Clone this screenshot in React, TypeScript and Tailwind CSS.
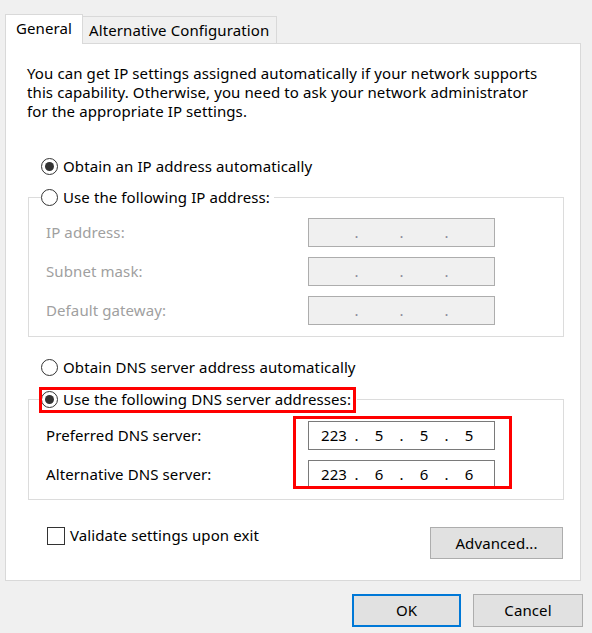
import React from 'react';

// Windows "Internet Protocol Version 4 (TCP/IPv4) Properties" dialog, General tab

const Radio: React.FC<{ checked?: boolean }> = ({ checked }) => (
    <span className="w-[17px] h-[17px] rounded-full border border-[#333333] bg-white flex items-center justify-center shrink-0">
        {checked && <span className="w-[9px] h-[9px] rounded-full bg-[#333333]" />}
    </span>
);

const IpBox: React.FC<{ octets?: string[]; disabled?: boolean }> = ({ octets, disabled }) => {
    const parts = octets ?? ['', '', '', ''];
    return (
        <div
            className={
                disabled
                    ? 'w-[187px] h-[29px] border border-[#adadad] bg-[#f0f0f0] flex items-center pl-[7px] text-[#8a8a9a]'
                    : 'w-[187px] h-[29px] border border-[#7a7a7a] bg-white flex items-center pl-[7px] text-black'
            }
        >
            {parts.map((p, i) => (
                <React.Fragment key={i}>
                    <span className="w-[36px] text-center">{p}</span>
                    {i < 3 && <span className="w-[9px] text-center">.</span>}
                </React.Fragment>
            ))}
        </div>
    );
};

const Row: React.FC<{ label: string; disabled?: boolean; children: React.ReactNode }> = ({ label, disabled, children }) => (
    <div className="flex items-center h-[29px]">
        <span className={disabled ? 'w-[262px] text-[#a0a0a0]' : 'w-[262px]'}>{label}</span>
        {children}
    </div>
);

const App: React.FC = () => {
    return (
        <div className="w-[592px] h-[633px] bg-[#f0f0f0] pt-[14px] pl-[5px] text-[15px] tracking-[0.1px] leading-[19px] text-black font-['Noto_Sans',_sans-serif]">
            {/* tabs */}
            <div className="flex items-end h-[29px]">
                <div className="relative z-10 h-[30px] -mb-px w-[78px] bg-white border border-b-0 border-[#d9d9d9] pl-[10px] pt-[4px]">
                    General
                </div>
                <div className="h-[27px] w-[194px] border border-l-0 border-b-0 border-[#d9d9d9] bg-[#f0f0f0] pl-[6px] pt-[4px]">
                    Alternative Configuration
                </div>
            </div>

            {/* tab page */}
            <div className="w-[576px] h-[538px] bg-white border border-[#d9d9d9] pt-[20px] pl-[21px]">
                <p>
                    <span className="block">You can get IP settings assigned automatically if your network supports</span>
                    <span className="block">this capability. Otherwise, you need to ask your network administrator</span>
                    <span className="block">for the appropriate IP settings.</span>
                </p>

                <div className="flex items-center gap-[5px] h-[20px] mt-[35px] ml-[14px]">
                    <Radio checked />
                    <span>Obtain an IP address automatically</span>
                </div>

                <fieldset className="mt-[11px] ml-[1px] w-[536px] border border-[#dcdcdc] pb-[11px]">
                    <legend className="ml-[12px] pr-[4px]">
                        <span className="flex items-center gap-[5px] h-[20px]">
                            <Radio />
                            <span>Use the following IP address:</span>
                        </span>
                    </legend>
                    <div className="flex flex-col gap-[10px] pt-[11px] pl-[17px]">
                        <Row label="IP address:" disabled>
                            <IpBox disabled />
                        </Row>
                        <Row label="Subnet mask:" disabled>
                            <IpBox disabled />
                        </Row>
                        <Row label="Default gateway:" disabled>
                            <IpBox disabled />
                        </Row>
                    </div>
                </fieldset>

                <div className="flex items-center gap-[5px] h-[20px] mt-[20px] ml-[14px]">
                    <Radio />
                    <span>Obtain DNS server address automatically</span>
                </div>

                <fieldset className="mt-[12px] ml-[1px] w-[536px] border border-[#dcdcdc] pb-[10px]">
                    <legend className="ml-[12px] pr-[6px]">
                        <span className="relative flex items-center gap-[5px] h-[20px]">
                            <Radio checked />
                            <span>Use the following DNS server addresses:</span>
                            <span className="absolute -left-[2px] -right-[5px] -top-[2px] -bottom-[4px] border-[3px] border-[#ff0000]" />
                        </span>
                    </legend>
                    <div className="relative flex flex-col gap-[10px] pt-[12px] pl-[17px]">
                        <Row label="Preferred DNS server:">
                            <IpBox octets={['223', '5', '5', '5']} />
                        </Row>
                        <Row label="Alternative DNS server:">
                            <IpBox octets={['223', '6', '6', '6']} />
                        </Row>
                        <span className="absolute left-[264px] w-[219px] top-[7px] h-[73px] border-[3px] border-[#ff0000]" />
                    </div>
                </fieldset>

                <div className="flex items-start mt-[26px]">
                    <div className="flex items-center gap-[5px] ml-[20px] h-[19px]">
                        <span className="w-[18px] h-[18px] border border-[#333333] bg-white shrink-0" />
                        <span>Validate settings upon exit</span>
                    </div>
                    <button className="ml-auto mr-[17px] mt-[1px] w-[133px] h-[32px] bg-[#e1e1e1] border border-[#adadad]">
                        Advanced...
                    </button>
                </div>
            </div>

            {/* dialog buttons */}
            <div className="flex justify-end gap-[12px] pr-[9px] mt-[13px]">
                <button className="w-[109px] h-[33px] bg-[#e1e1e1] border-2 border-[#0078d7]">OK</button>
                <button className="w-[110px] h-[33px] bg-[#e1e1e1] border border-[#adadad]">Cancel</button>
            </div>
        </div>
    );
};

export default App;
